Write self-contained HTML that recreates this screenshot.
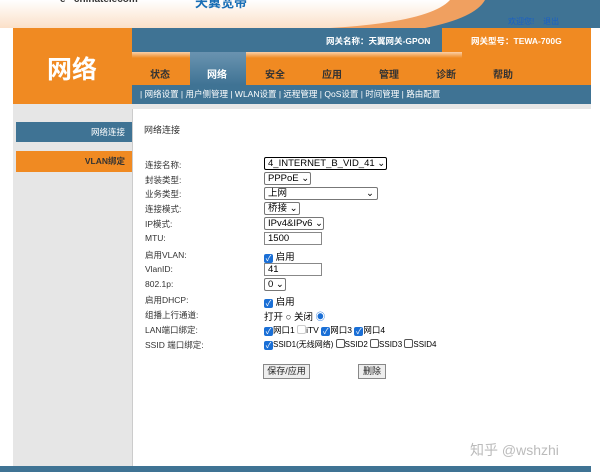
<!DOCTYPE html>
<html><head><meta charset="utf-8"><style>
*{margin:0;padding:0;box-sizing:border-box}
body{width:600px;height:472px;background:#fff;font-family:"Liberation Sans","Noto Sans CJK SC",sans-serif;font-size:9px;color:#222;position:relative;overflow:hidden}
.a{position:absolute}
.lbl{position:absolute;left:145px;font-size:8.5px;color:#333}
.ctl{position:absolute;left:264px;font-size:9.5px;color:#000}
.sel{border:1px solid #777;border-radius:2px;background:#fff;height:13px;padding:0 3px;line-height:11px;white-space:nowrap}
.inp{border:1px solid #888;height:13px;padding:0 3px;line-height:11px;background:#fff}
.cb{display:inline-block;width:9px;height:9px;background:#1a6fd6;border-radius:2px;vertical-align:-1px;color:#fff;font-size:8px;line-height:9px;text-align:center}
.cbe{display:inline-block;width:9px;height:9px;border:1px solid #555;border-radius:2px;vertical-align:-1px}
.tab{position:absolute;top:66px;font-size:10px;font-weight:bold;color:#333}
</style></head><body>
<div class="a" style="left:0;top:0;width:600px;height:28px;background:linear-gradient(#fff,#fbe0c8)"></div>
<svg class="a" style="left:0;top:0" width="600" height="30"><path d="M330 28 Q430 22 450 0 L600 0 L600 28 Z" fill="#f0a060"/><path d="M425 28 Q475 18 485 0 L600 0 L600 28 Z" fill="#3f7394"/></svg>
<div class="a" style="left:60px;top:-6px;font-size:10px;font-weight:bold;color:#333">e &nbsp; chinatelecom</div>
<div class="a" style="left:195px;top:-8px;font-size:13px;font-weight:bold;color:#1a6fb6">天翼宽带</div>
<div class="a" style="left:508px;top:16px;font-size:8px;color:#1a5fc6">欢迎您! &nbsp;&nbsp; 退出</div>
<div class="a" style="left:13px;top:28px;width:119px;height:76px;background:#f08a22"></div>
<div class="a" style="left:47px;top:50px;font-size:25px;font-weight:bold;color:#fff">网络</div>
<div class="a" style="left:132px;top:28px;width:310px;height:24px;background:#3f7394"></div>
<div class="a" style="left:442px;top:28px;width:149px;height:24px;background:#f08a22"></div>
<div class="a" style="left:326px;top:35px;font-size:8.5px;font-weight:bold;color:#fff">网关名称：天翼网关-GPON</div>
<div class="a" style="left:471px;top:35px;font-size:8.5px;font-weight:bold;color:#fff">网关型号：TEWA-700G</div>
<div class="a" style="left:132px;top:52px;width:459px;height:33px;background:#f08a22"></div>
<div class="a" style="left:132px;top:52px;width:330px;height:6px;background:linear-gradient(#fbd0a8,#f08a22)"></div>
<div class="a" style="left:190px;top:52px;width:56px;height:33px;background:linear-gradient(#6a93b0,#3f7394)"></div>
<div class="tab" style="left:150px">状态</div><div class="tab" style="left:207px;color:#fff">网络</div><div class="tab" style="left:265px">安全</div><div class="tab" style="left:322px">应用</div><div class="tab" style="left:379px">管理</div><div class="tab" style="left:436px">诊断</div><div class="tab" style="left:493px">帮助</div>
<div class="a" style="left:132px;top:85px;width:459px;height:19px;background:#3f7394"></div>
<div class="a" style="left:140px;top:88px;font-size:8.5px;color:#fff;white-space:nowrap;word-spacing:0">| 网络设置 | 用户侧管理 | WLAN设置 | 远程管理 | QoS设置 | 时间管理 | 路由配置</div>
<div class="a" style="left:13px;top:104px;width:578px;height:5px;background:#e6e6e6"></div>
<div class="a" style="left:13px;top:104px;width:119px;height:362px;background:#e6e6e6"></div>
<div class="a" style="left:132px;top:109px;width:459px;height:357px;background:#fff;border-left:1px solid #ccc"></div>
<div class="a" style="left:16px;top:122px;width:116px;height:20px;background:#3f7394;color:#fff;font-size:8.5px;text-align:right;padding:4px 7px 0 0">网络连接</div>
<div class="a" style="left:16px;top:151px;width:116px;height:21px;background:#f08a22;color:#333;font-size:8.5px;font-weight:bold;text-align:right;padding:4px 7px 0 0">VLAN绑定</div>
<div class="a" style="left:144px;top:123px;font-size:9px;color:#333">网络连接</div>
<div class="a" style="left:0;top:466px;width:591px;height:6px;background:#3f7394"></div>
<div class="lbl" style="top:159px">连接名称:</div>
<div class="lbl" style="top:174px">封装类型:</div>
<div class="lbl" style="top:188px">业务类型:</div>
<div class="lbl" style="top:203px">连接模式:</div>
<div class="lbl" style="top:218px">IP模式:</div>
<div class="lbl" style="top:233px">MTU:</div>
<div class="lbl" style="top:249px">启用VLAN:</div>
<div class="lbl" style="top:264px">VlanID:</div>
<div class="lbl" style="top:279px">802.1p:</div>
<div class="lbl" style="top:294px">启用DHCP:</div>
<div class="lbl" style="top:309px">组播上行通道:</div>
<div class="lbl" style="top:324px">LAN端口绑定:</div>
<div class="lbl" style="top:339px">SSID 端口绑定:</div>
<div class="ctl sel" style="top:157px;width:123px;border:1.5px solid #000">4_INTERNET_B_VID_41 ⌄</div>
<div class="ctl sel" style="top:172px;width:47px">PPPoE ⌄</div>
<div class="ctl sel" style="top:187px;width:114px">上网<span style="float:right">⌄</span></div>
<div class="ctl sel" style="top:202px;width:36px">桥接 ⌄</div>
<div class="ctl sel" style="top:217px;width:60px">IPv4&amp;IPv6 ⌄</div>
<div class="ctl inp" style="top:232px;width:58px">1500</div>
<div class="ctl" style="top:249px"><span class="cb">✓</span> 启用</div>
<div class="ctl inp" style="top:263px;width:58px">41</div>
<div class="ctl sel" style="top:278px;width:22px">0 ⌄</div>
<div class="ctl" style="top:294px"><span class="cb">✓</span> 启用</div>
<div class="ctl" style="top:309px">打开 ○ 关闭 <span style="color:#1a6fd6">◉</span></div>
<div class="ctl" style="top:324px;font-size:8.5px"><span class="cb">✓</span>网口1 <span class="cbe" style="border-color:#ccc"></span>iTV <span class="cb">✓</span>网口3 <span class="cb">✓</span>网口4</div>
<div class="ctl" style="top:339px;font-size:8px;white-space:nowrap"><span class="cb">✓</span>SSID1(无线网络) <span class="cbe"></span>SSID2 <span class="cbe"></span>SSID3 <span class="cbe"></span>SSID4</div>
<div class="a" style="left:263px;top:364px;width:47px;height:15px;border:1px solid #888;background:#eee;font-size:9px;text-align:center;line-height:13px">保存/应用</div>
<div class="a" style="left:358px;top:364px;width:28px;height:15px;border:1px solid #888;background:#eee;font-size:9px;text-align:center;line-height:13px">删除</div>
<div class="a" style="left:470px;top:440px;font-size:14px;color:#bbb">知乎 @wshzhi</div>
</body></html>
